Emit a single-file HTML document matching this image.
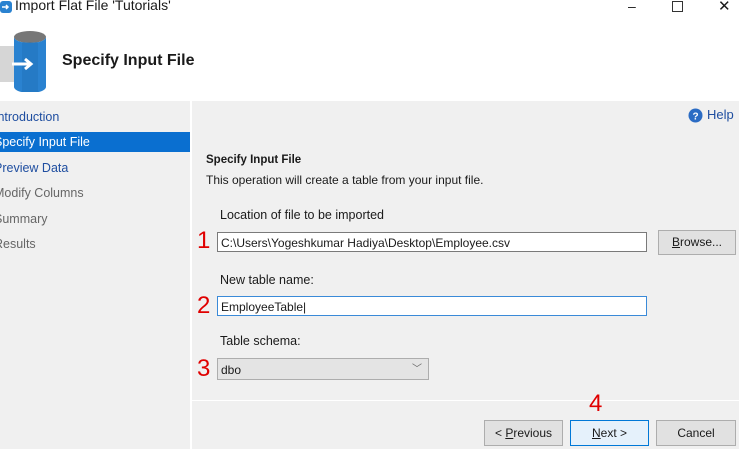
<!DOCTYPE html>
<html><head><meta charset="utf-8"><style>
body{margin:0;width:742px;height:449px;background:#fff;position:relative;overflow:hidden;font-family:"Liberation Sans",sans-serif;font-size:12px;color:#1a1a1a}
.a{position:absolute;white-space:nowrap}
.nav{left:0;top:101px;width:190px;height:348px;background:#f0f0f0}
.right{left:192px;top:101px;width:547px;height:348px;background:#f0f0f0}
.item{position:absolute;left:-6px;height:20px;line-height:20px;font-size:12.5px;width:196px}
.box{position:absolute;background:#fff;border:1px solid #7a7a7a;height:20px;line-height:20px;padding-left:3px;box-sizing:border-box;font-size:12px}
.btn{position:absolute;background:#e1e1e1;border:1px solid #adadad;box-sizing:border-box;text-align:center;font-size:12px}
.num{position:absolute;color:#e00000;font-size:24px}
</style></head><body>
<svg class="a" style="left:0;top:0" width="14" height="14"><rect x="0" y="1" width="12" height="12" rx="3" fill="#2a82d0"/><path d="M2 7h6M6 5l2 2-2 2" stroke="#fff" stroke-width="1.5" fill="none"/></svg>
<div class="a" style="left:15px;top:-3px;font-size:14px">Import Flat File 'Tutorials'</div>
<div class="a" style="left:628px;top:0;font-size:14px;line-height:12px">–</div>
<div class="a" style="left:672px;top:1px;width:9px;height:9px;border:1px solid #333"></div>
<div class="a" style="left:718px;top:-3px;font-size:15px">✕</div>
<svg class="a" style="left:0;top:30px" width="50" height="62">
<ellipse cx="30" cy="7" rx="16" ry="6" fill="#777"/>
<path d="M14 7v50a16 6 0 0 0 32 0V7a16 6 0 0 1-32 0z" fill="#2a82d0"/>
<path d="M30 12v51" stroke="#1f6fb5" stroke-width="16" opacity=".4"/>
<rect x="0" y="16" width="14" height="36" fill="#d6d6d6"/>
<path d="M12 34h18M25 29l6 5-6 5" stroke="#fff" stroke-width="3" fill="none"/>
</svg>
<div class="a" style="left:62px;top:52px;font-size:16px;font-weight:bold">Specify Input File</div>
<div class="a nav">
<div class="item" style="top:6px;color:#1f4ea0">Introduction</div>
<div class="item" style="top:31px;background:#0a6fd0;color:#fff;left:0;width:190px;text-indent:-6px">Specify Input File</div>
<div class="item" style="top:57px;color:#1f4ea0">Preview Data</div>
<div class="item" style="top:82px;color:#666">Modify Columns</div>
<div class="item" style="top:108px;color:#666">Summary</div>
<div class="item" style="top:133px;color:#666">Results</div>
</div>
<div class="a right">
<svg class="a" style="left:496px;top:7px" width="15" height="15"><circle cx="7.5" cy="7.5" r="7" fill="#2b6cc4"/><text x="7.5" y="11.5" font-size="10" font-weight="bold" fill="#fff" text-anchor="middle" font-family="Liberation Sans">?</text></svg>
<div class="a" style="left:515px;top:6px;color:#1f4ea0;font-size:13px">Help</div>
<div class="a" style="left:14px;top:53px;font-weight:bold;font-size:11.5px">Specify Input File</div>
<div class="a" style="left:14px;top:72px;font-size:12px">This operation will create a table from your input file.</div>
<div class="a" style="left:28px;top:107px;font-size:12.5px">Location of file to be imported</div>
<div class="box" style="left:25px;top:131px;width:430px">C:\Users\Yogeshkumar Hadiya\Desktop\Employee.csv</div>
<div class="btn" style="left:466px;top:129px;width:78px;height:25px;line-height:23px"><u>B</u>rowse...</div>
<div class="a" style="left:28px;top:172px;font-size:12.5px">New table name:</div>
<div class="box" style="left:25px;top:195px;width:430px;border-color:#3a8ad8">EmployeeTable|</div>
<div class="a" style="left:28px;top:233px;font-size:12.5px">Table schema:</div>
<div class="box" style="left:25px;top:257px;width:212px;height:22px;line-height:22px;background:#e4e4e4;border-color:#adadad">dbo<span style="position:absolute;right:6px;color:#666;font-size:10px">﹀</span></div>
<div class="a" style="left:0;top:299px;width:547px;height:1px;background:#fff"></div>
<div class="btn" style="left:292px;top:319px;width:79px;height:26px;line-height:24px">&lt; <u>P</u>revious</div>
<div class="btn" style="left:378px;top:319px;width:79px;height:26px;line-height:24px;background:#e5f1fb;border-color:#0078d7"><u>N</u>ext &gt;</div>
<div class="btn" style="left:464px;top:319px;width:80px;height:26px;line-height:24px">Cancel</div>
</div>
<div class="num" style="left:197px;top:227px">1</div>
<div class="num" style="left:197px;top:292px">2</div>
<div class="num" style="left:197px;top:355px">3</div>
<div class="num" style="left:589px;top:390px">4</div>
</body></html>
